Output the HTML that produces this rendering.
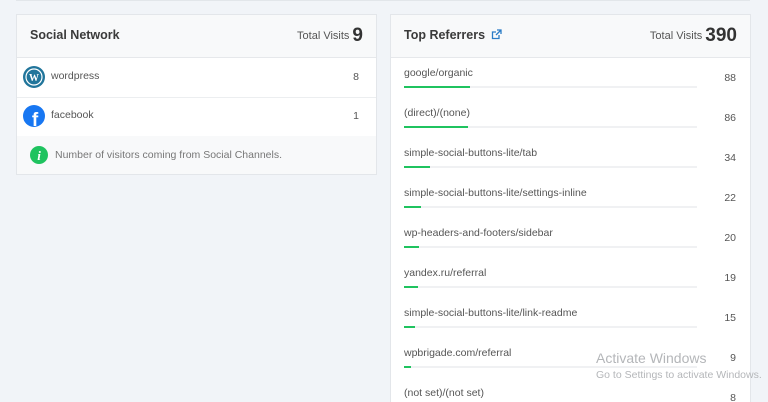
<!DOCTYPE html>
<html style="overflow:hidden;width:768px;height:402px"><head><style>
body{margin:0;width:768px;height:402px;overflow:hidden;background:#f1f4f8;font-family:"Liberation Sans",sans-serif;position:relative;color:#444}
.top{position:absolute;left:16px;top:0;width:734px;height:1px;background:#e2e6ea}
.card{position:absolute;background:#fff;border:1px solid #e3e6ea;box-sizing:border-box}
.hd{position:absolute;left:0;right:0;top:0;height:42px;background:#f8f9fa;border-bottom:1px solid #e6e8eb}
.t{position:absolute;left:13px;top:13px;font-size:12.5px;font-weight:bold;color:#3a3a3a}
.tv{position:absolute;right:13px;top:10px;font-size:11px;color:#555}
.tv b{font-size:19px;color:#333;margin-left:3px;vertical-align:-2px}
.row{position:absolute;left:0;right:0;font-size:10.5px;color:#555}
.ref{position:absolute;left:13px;font-size:10.5px;color:#555}
.track{position:absolute;left:13px;width:293px;height:2px;background:#f0f1f3}
.bar{height:2px;background:#1fc35f}
.n{position:absolute;right:14px;font-size:10.5px;color:#555}
</style></head><body>
<div class="top"></div>
<div class="card" style="left:16px;top:14px;width:361px;height:161px">
 <div class="hd"><div class="t">Social Network</div><div class="tv">Total Visits<b>9</b></div></div>
 <div class="row" style="top:42px;height:40px;border-bottom:1px solid #eceef0">
  <svg style="position:absolute;left:6px;top:9px" width="22" height="22" viewBox="0 0 22 22"><circle cx="11" cy="11" r="11" fill="#21759b"/><circle cx="11" cy="11" r="8" fill="none" stroke="#fff" stroke-width="1.2"/><text x="11" y="15" font-size="10" font-weight="bold" fill="#fff" text-anchor="middle" font-family="Liberation Serif">W</text></svg>
  <span style="position:absolute;left:34px;top:13px">wordpress</span><span style="position:absolute;right:17px;top:14px">8</span></div>
 <div class="row" style="top:82px;height:39px;border-bottom:1px solid #e6e8eb">
  <svg style="position:absolute;left:6px;top:8px" width="22" height="22" viewBox="0 0 22 22"><circle cx="11" cy="11" r="11" fill="#1877f2"/><text x="12" y="21" font-size="19" font-weight="bold" fill="#fff" text-anchor="middle">f</text></svg>
  <span style="position:absolute;left:34px;top:12px">facebook</span><span style="position:absolute;right:17px;top:13px">1</span></div>
 <div class="row" style="top:121px;height:38px;background:#f8f9fa">
  <svg style="position:absolute;left:13px;top:10px" width="18" height="18" viewBox="0 0 18 18"><circle cx="9" cy="9" r="9" fill="#1fc35f"/><text x="9" y="14" font-size="13" font-weight="bold" font-style="italic" fill="#fff" text-anchor="middle" font-family="Liberation Serif">i</text></svg>
  <span style="position:absolute;left:38px;top:13px;color:#777">Number of visitors coming from Social Channels.</span></div>
</div>
<div class="card" style="left:390px;top:14px;width:361px;height:388px;border-bottom:none">
 <div class="hd"><div class="t">Top Referrers <svg width="11" height="11" viewBox="0 0 11 11" style="vertical-align:-1px;margin-left:2px"><path d="M8 6v3.5H1.5V3H5" fill="none" stroke="#2a7cc7" stroke-width="1.3"/><path d="M6 1h4v4M10 1L5 6" fill="none" stroke="#2a7cc7" stroke-width="1.3"/></svg></div><div class="tv">Total Visits<b>390</b></div></div>
 <div class="ref" style="top:52px">google/organic</div><div class="track" style="top:71px"><div class="bar" style="width:66px"></div></div><div class="n" style="top:57px">88</div>
 <div class="ref" style="top:92px">(direct)/(none)</div><div class="track" style="top:111px"><div class="bar" style="width:64px"></div></div><div class="n" style="top:97px">86</div>
 <div class="ref" style="top:132px">simple-social-buttons-lite/tab</div><div class="track" style="top:151px"><div class="bar" style="width:26px"></div></div><div class="n" style="top:137px">34</div>
 <div class="ref" style="top:172px">simple-social-buttons-lite/settings-inline</div><div class="track" style="top:191px"><div class="bar" style="width:17px"></div></div><div class="n" style="top:177px">22</div>
 <div class="ref" style="top:212px">wp-headers-and-footers/sidebar</div><div class="track" style="top:231px"><div class="bar" style="width:15px"></div></div><div class="n" style="top:217px">20</div>
 <div class="ref" style="top:252px">yandex.ru/referral</div><div class="track" style="top:271px"><div class="bar" style="width:14px"></div></div><div class="n" style="top:257px">19</div>
 <div class="ref" style="top:292px">simple-social-buttons-lite/link-readme</div><div class="track" style="top:311px"><div class="bar" style="width:11px"></div></div><div class="n" style="top:297px">15</div>
 <div class="ref" style="top:332px">wpbrigade.com/referral</div><div class="track" style="top:351px"><div class="bar" style="width:7px"></div></div><div class="n" style="top:337px">9</div>
 <div class="ref" style="top:372px">(not set)/(not set)</div><div class="n" style="top:377px">8</div>
</div>
<div style="position:absolute;left:596px;top:350px;font-size:14px;color:#b4b6b9">Activate Windows</div>
<div style="position:absolute;left:596px;top:369px;font-size:10.5px;color:#b4b6b9">Go to Settings to activate Windows.</div>
</body></html>
